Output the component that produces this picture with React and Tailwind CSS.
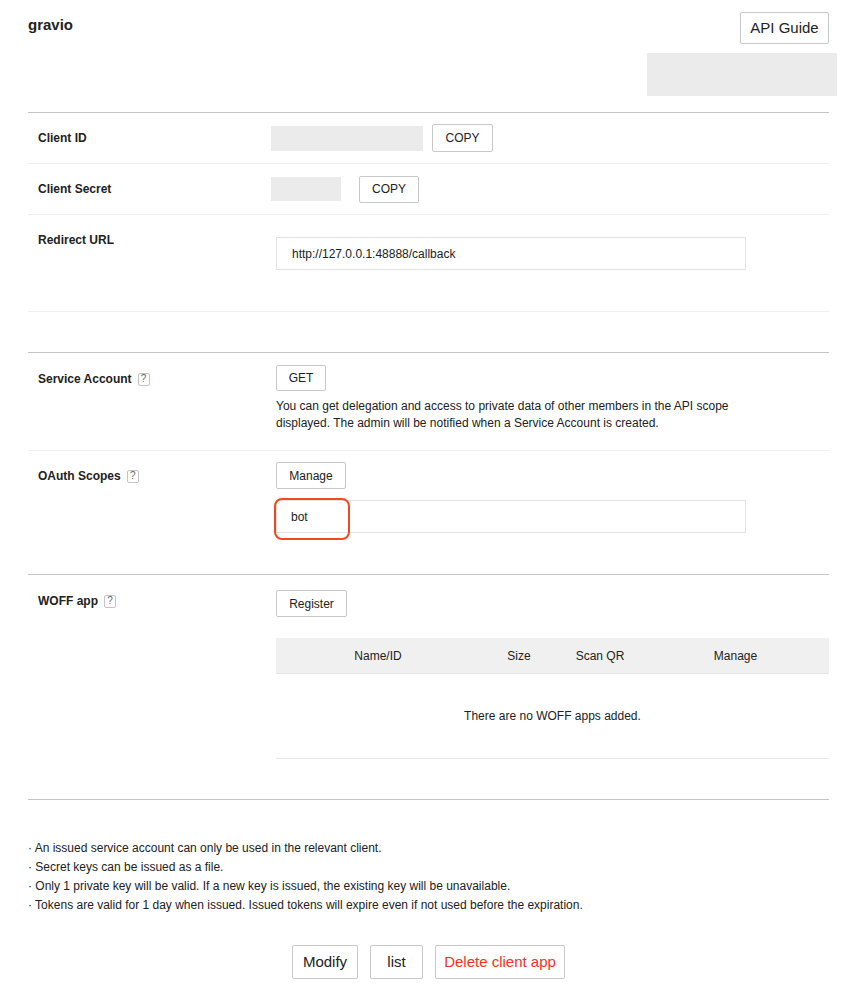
import React from "react";

const font = { fontFamily: '"Liberation Sans", Arial, Helvetica, sans-serif' };

function Btn({ children, className = "" }) {
  return (
    <button
      className={
        "flex items-center justify-center bg-white border border-[#c9c9c9] rounded-[2px] text-[#222] " +
        className
      }
    >
      {children}
    </button>
  );
}

function Help() {
  return (
    <span className="inline-flex items-center justify-center w-[12px] h-[13px] border border-[#c4c4c4] rounded-[2px] text-[10px] leading-none text-[#666] font-normal ml-[6px]">
      ?
    </span>
  );
}

export default function App() {
  return (
    <div className="w-[864px] min-h-[1000px] bg-white text-[#222]" style={font}>
      {/* Header */}
      <div className="pl-[28px] pr-[35px] pt-[12px] flex flex-col">
        <div className="flex justify-between items-start">
          <div className="text-[15px] font-bold leading-[20px] mt-[3px]">gravio</div>
          <Btn className="w-[89px] h-[32px] text-[15px]">API Guide</Btn>
        </div>
        <div className="self-end mr-[-8px] mt-[9px] w-[190px] h-[43px] bg-[#ebebeb]" />
      </div>

      <div className="ml-[28px] mr-[35px] mt-[16px]">
        {/* Section 1 */}
        <div className="border-t border-[#c4c4c4]">
          <div className="flex items-center h-[51px] border-b border-[#efefef] pl-[10px]">
            <div className="w-[233px] text-[12px] font-bold">Client ID</div>
            <div className="flex items-center">
              <div className="w-[152px] h-[25px] bg-[#ebebeb]" />
              <Btn className="ml-[9px] w-[61px] h-[28px] text-[12px]">COPY</Btn>
            </div>
          </div>
          <div className="flex items-center h-[51px] border-b border-[#efefef] pl-[10px]">
            <div className="w-[233px] text-[12px] font-bold">Client Secret</div>
            <div className="flex items-center">
              <div className="w-[70px] h-[24px] bg-[#ebebeb]" />
              <Btn className="ml-[18px] w-[60px] h-[27px] text-[12px]">COPY</Btn>
            </div>
          </div>
          <div className="flex items-start h-[97px] border-b border-[#efefef] pl-[10px]">
            <div className="w-[233px] text-[12px] font-bold leading-[14px] pt-[18px]">Redirect URL</div>
            <div className="pt-[22px] pl-[5px]">
              <div className="w-[470px] h-[33px] border border-[#e3e3e3] flex items-center pl-[15px] text-[12px] text-[#222]">
                http://127.0.0.1:48888/callback
              </div>
            </div>
          </div>
        </div>

        {/* Section 2 */}
        <div className="mt-[40px] border-t border-[#c4c4c4]">
          <div className="flex items-start h-[98px] border-b border-[#efefef] pl-[10px]">
            <div className="w-[233px] text-[12px] font-bold leading-[14px] pt-[19px] flex items-center">
              Service Account <Help />
            </div>
            <div className="pt-[12px] pl-[5px]">
              <Btn className="w-[50px] h-[26px] text-[12px]">GET</Btn>
              <p className="mt-[7px] text-[12px] leading-[17px] text-[#222] w-[480px]">
                You can get delegation and access to private data of other members in the API scope displayed. The admin will be notified when a Service Account is created.
              </p>
            </div>
          </div>
          <div className="flex items-start h-[123px] pl-[10px]">
            <div className="w-[233px] text-[12px] font-bold leading-[14px] pt-[18px] flex items-center">
              OAuth Scopes <Help />
            </div>
            <div className="pt-[11px] pl-[5px]">
              <Btn className="w-[70px] h-[27px] text-[12px]">Manage</Btn>
              <div className="relative mt-[11px] w-[470px] h-[33px] border border-[#e3e3e3] flex items-center pl-[14px] text-[12px]">
                bot
                <div className="absolute left-[-3px] top-[-3px] w-[76px] h-[42px] border-2 border-[#f04a23] rounded-[8px]" />
              </div>
            </div>
          </div>
        </div>

        {/* Section 3 */}
        <div className="border-t border-b border-[#c4c4c4]">
          <div className="flex items-start h-[224px] pl-[10px]">
            <div className="w-[233px] text-[12px] font-bold leading-[14px] pt-[19px] flex items-center">
              WOFF app <Help />
            </div>
            <div className="flex-1 pt-[15px] pl-[5px]">
              <Btn className="w-[71px] h-[27px] text-[12px]">Register</Btn>
              <div className="mt-[21px] w-full">
                <div className="flex h-[36px] bg-[#f0f0f0] border-b border-[#e6e6e6] items-center text-[12px] text-[#222]">
                  <div className="w-[204px] text-center">Name/ID</div>
                  <div className="w-[78px] text-center">Size</div>
                  <div className="w-[84px] text-center">Scan QR</div>
                  <div className="flex-1 text-center">Manage</div>
                </div>
                <div className="h-[85px] border-b border-[#e6e6e6] flex items-center justify-center text-[12px] text-[#222]">
                  There are no WOFF apps added.
                </div>
              </div>
            </div>
          </div>
        </div>

        {/* Notes */}
        <ul className="mt-[39px] text-[12px] leading-[19px] text-[#222]">
          <li>· An issued service account can only be used in the relevant client.</li>
          <li>· Secret keys can be issued as a file.</li>
          <li>· Only 1 private key will be valid. If a new key is issued, the existing key will be unavailable.</li>
          <li>· Tokens are valid for 1 day when issued. Issued tokens will expire even if not used before the expiration.</li>
        </ul>

        <div className="mt-[30px] flex justify-center gap-[12px]">
          <Btn className="w-[66px] h-[34px] text-[15px]">Modify</Btn>
          <Btn className="w-[53px] h-[34px] text-[15px]">list</Btn>
          <Btn className="w-[130px] h-[34px] text-[15px] !text-[#f5302a]">Delete client app</Btn>
        </div>
      </div>
    </div>
  );
}
